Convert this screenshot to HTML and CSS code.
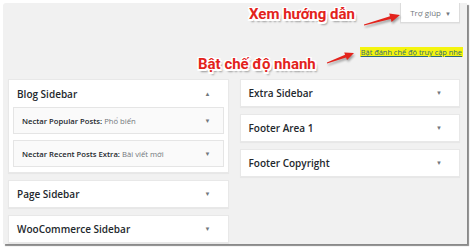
FILE: index.html
```html
<!DOCTYPE html>
<html lang="vi">

<head>
    <meta charset="UTF-8">
    <meta name="viewport" content="width=device-width, initial-scale=1.0">
    <title>Widgets</title>
    <link rel="stylesheet" href="styles.css">
</head>

<body>
    <div class="screen">
        <!-- thanh trên: nút trợ giúp và liên kết -->
        <div class="top">
            <button class="help">Trợ giúp <span class="caret">▼</span></button>
            <a class="access" href="#">Bật đánh chế độ truy cập nhe</a>
        </div>

        <div class="columns">
            <div class="col">
                <div class="area open">
                    <div class="area-head">
                        <span>Blog Sidebar</span>
                        <span class="toggle">▲</span>
                    </div>
                    <div class="widget">
                        <span><b>Nectar Popular Posts:</b> <i>Phổ biến</i></span>
                        <span class="toggle">▼</span>
                    </div>
                    <div class="widget">
                        <span><b>Nectar Recent Posts Extra:</b> <i>Bài viết mới</i></span>
                        <span class="toggle">▼</span>
                    </div>
                </div>
                <div class="area">
                    <div class="area-head">
                        <span>Page Sidebar</span>
                        <span class="toggle">▼</span>
                    </div>
                </div>
                <div class="area">
                    <div class="area-head">
                        <span>WooCommerce Sidebar</span>
                        <span class="toggle">▼</span>
                    </div>
                </div>
            </div>
            <div class="col">
                <div class="area">
                    <div class="area-head">
                        <span>Extra Sidebar</span>
                        <span class="toggle">▼</span>
                    </div>
                </div>
                <div class="area">
                    <div class="area-head">
                        <span>Footer Area 1</span>
                        <span class="toggle">▼</span>
                    </div>
                </div>
                <div class="area">
                    <div class="area-head">
                        <span>Footer Copyright</span>
                        <span class="toggle">▼</span>
                    </div>
                </div>
            </div>
        </div>

        <!-- chú thích màu đỏ -->
        <div class="note note-help">Xem hướng dẫn</div>
        <div class="note note-fast">Bật chế độ nhanh</div>
        <svg class="arrows" width="464" height="241" viewBox="0 0 464 241">
            <polygon points="361.1,22.6 387.8,16.1 388.6,19.0 397,12 386.2,10.4 387.0,13.3 360.9,21.4" />
            <polygon points="324.1,60.5 343.1,54.4 344.0,56.9 351,50 341.2,49.4 342.1,51.8 323.9,59.5" />
        </svg>
    </div>
</body>

</html>
```

FILE: styles.css
```css
body {
    margin: 0;
    background-color: #fff;
    font-family: "Open Sans", "Noto Sans", sans-serif;
}

.screen {
    position: relative;
    width: 464px;
    height: 241px;
    margin: 3px;
    background-color: #f1f1f1;
    border-radius: 3px 0 0 0;
    box-shadow: 2px 2px 1px #8a8a8a;
    overflow: hidden;
}

.top {
    height: 76px;
    display: flex;
    flex-direction: column;
    align-items: flex-end;
    padding-right: 4px;
}

.help {
    height: 20px;
    margin-right: 3px;
    padding: 0 8px 0 9px;
    font-family: inherit;
    font-size: 8px;
    color: #72777c;
    background-color: #fff;
    border: 1px solid #dcdcdc;
    border-top: none;
    box-shadow: 0 1px 1px rgba(0, 0, 0, 0.04);
}

.help .caret {
    font-size: 6px;
    margin-left: 2px;
}

.access {
    margin-top: 24px;
    padding: 0 1px;
    font-size: 7.4px;
    line-height: 10px;
    color: #2b6a7a;
    background-color: #f4f40e;
}

.columns {
    display: flex;
    gap: 11px;
    padding: 0 7px 0 5px;
}

.col {
    flex: 1;
    display: flex;
    flex-direction: column;
    gap: 7px;
}

.area {
    background-color: #fff;
    border: 1px solid #e8e8e8;
    box-shadow: 0 1px 1px rgba(0, 0, 0, 0.04);
}

.area.open {
    padding: 0 4px 5px;
}

.area-head {
    height: 26px;
    display: flex;
    justify-content: space-between;
    align-items: center;
    padding: 0 17px 0 8px;
    font-size: 10px;
    font-weight: 600;
    color: #23282d;
}

.area.open .area-head {
    padding: 0 13px 0 4px;
    height: 27px;
}

.toggle {
    font-size: 6px;
    color: #72777c;
    font-weight: normal;
}

.widget {
    height: 25px;
    display: flex;
    justify-content: space-between;
    align-items: center;
    padding: 0 12px 0 8px;
    margin-bottom: 6px;
    font-size: 7.7px;
    color: #23282d;
    background-color: #fafafa;
    border: 1px solid #e5e5e5;
}

.widget:last-child {
    margin-bottom: 0;
}

.widget b {
    font-weight: 600;
}

.widget i {
    font-style: normal;
    color: #72777c;
}

/* chú thích */
.note {
    position: absolute;
    font-family: Roboto, "Noto Sans", sans-serif;
    font-size: 15px;
    font-weight: bold;
    color: #e3231c;
    text-shadow: -1.5px -1.5px 0 #fff, 1.5px -1.5px 0 #fff, -1.5px 1.5px 0 #fff, 1.5px 1.5px 0 #fff,
        0 -1.5px 0 #fff, 0 1.5px 0 #fff, -1.5px 0 0 #fff, 1.5px 0 0 #fff, 2px 3px 2px rgba(0, 0, 0, 0.4);
    white-space: nowrap;
}

.note-help {
    left: 246px;
    top: 2px;
}

.note-fast {
    left: 195px;
    top: 52px;
}

.arrows {
    position: absolute;
    left: 0;
    top: 0;
    pointer-events: none;
    fill: #e3231c;
    filter: drop-shadow(1px 2px 1px rgba(0, 0, 0, 0.35));
}
```
